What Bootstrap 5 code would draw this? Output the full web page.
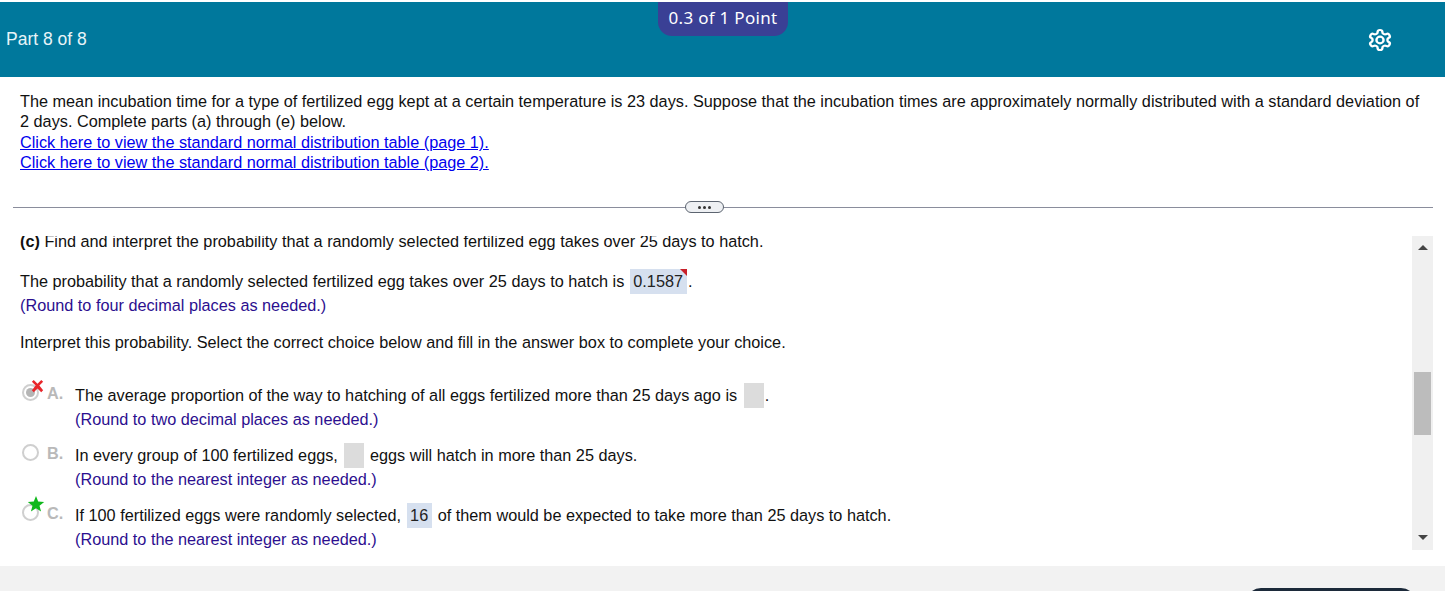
<!DOCTYPE html>
<html lang="en">
<head>
    <meta charset="UTF-8">
    <meta name="viewport" content="width=device-width, initial-scale=1.0">
    <title>Part 8 of 8</title>
    <link rel="stylesheet" href="https://cdn.jsdelivr.net/npm/bootstrap@5.3.0/dist/css/bootstrap.min.css">
    <style>
        html, body { height: 591px; overflow: hidden; }
        body { font-family: "Liberation Sans", Arial, sans-serif; font-size: 16.25px; line-height: 20px; color: #111; background: #fff; }
        .top-bar { height: 75px; margin-top: 2px; background: #00789c; color: #e8f4f8; padding: 0 52px 0 6px; position: relative; }
        .part-label { margin-top: -1px; font-size: 17.5px; }
        .score-tab { position: absolute; left: 658px; top: 0; width: 130px; height: 34px; background: #3a4095; color: #fff; border-radius: 0 0 14px 14px; font-family: "Noto Sans", sans-serif; font-size: 17px; letter-spacing: .3px; text-align: center; line-height: 32px; }
        .gear-icon { margin-top: 1px; }
        .question-head { height: 123px; padding: 14px 20px 0; }
        .question-head a { color: #0000ee; }
        .split-line { height: 1px; margin: 7px 12px 0 13px; background: #8a8d9c; position: relative; }
        .split-pill { position: absolute; left: 672px; top: -6px; width: 39px; height: 12px; background: #eef0f3; border: 1px solid #5c6470; border-radius: 6px; }
        .split-pill span { position: absolute; top: 4px; width: 3px; height: 3px; background: #333; border-radius: 50%; }
        .scroll-box { height: 314px; margin: 28px 12px 0 0; overflow: hidden; }
        .scroll-text { padding-left: 20px; margin-top: -5px; }
        .scroll-text p { margin: 0; }
        .hint { color: #2c0f8f; margin-top: 1px; }
        .scroll-text p.hint { margin-top: 1px; }
        .fake-scroll { width: 21px; background: #f0f0f0; }
        .scroll-thumb { width: 17px; height: 63px; margin: 122px 2px 0; background: #bcbcbc; }
        .arrow-up { width: 0; height: 0; margin: 9px auto 0; border: 5px solid transparent; border-top: 0; border-bottom: 5px solid #444; }
        .arrow-down { width: 0; height: 0; margin: 0 auto 10px; border: 5px solid transparent; border-bottom: 0; border-top: 5px solid #444; }
        .answer-box { display: inline-block; padding: 0 3.5px; margin: 0 1.5px 0 1px; height: 25px; line-height: 25px; background: #d6e0ef; color: #222; position: relative; }
        .answer-empty { display: inline-block; width: 20px; height: 25px; margin: 0 1px 0 2px; background: #dcdcdc; vertical-align: -7px; }
        .wrong-corner { position: absolute; right: 0; top: 0; width: 0; height: 0; border-top: 7px solid #c8202a; border-left: 7px solid transparent; }
        .choice-row { display: flex; height: 60px; position: relative; }
        .radio-ring { width: 17px; height: 17px; margin: 1px 0 0 2px; border: 2px solid #cfcfcf; border-radius: 50%; flex: none; position: relative; }
        .radio-ring.on::after { content: ""; position: absolute; left: 2px; top: 2px; width: 9px; height: 9px; background: #b5b5b5; border-radius: 50%; }
        .choice-letter { width: 36px; padding-left: 8px; color: #b9b9b9; font-weight: 700; flex: none; }
        .mark-x { position: absolute; left: 10px; top: -4px; }
        .mark-star { position: absolute; left: 7px; top: -8px; }
        .ft-bar { height: 25px; margin-top: 16px; background: #f2f2f2; position: relative; overflow: hidden; }
        .ft-btn { position: absolute; left: 1246px; top: 22px; width: 170px; height: 30px; background: #1c2a3a; border-radius: 15px; }
    </style>
</head>
<body>

    <div class="top-bar d-flex align-items-center justify-content-between">
        <div class="part-label">Part 8 of 8</div>
        <div class="score-tab">0.3 of 1 Point</div>
        <svg class="gear-icon" width="26" height="24" viewBox="0 0 24 24" preserveAspectRatio="none" fill="none" stroke="#fff" stroke-width="2.2" stroke-linejoin="round" stroke-linecap="round">
            <path d="M12.22 2h-.44a2 2 0 0 0-2 2v.18a2 2 0 0 1-1 1.73l-.43.25a2 2 0 0 1-2 0l-.15-.08a2 2 0 0 0-2.73.73l-.22.38a2 2 0 0 0 .73 2.73l.15.1a2 2 0 0 1 1 1.72v.51a2 2 0 0 1-1 1.74l-.15.09a2 2 0 0 0-.73 2.73l.22.38a2 2 0 0 0 2.73.73l.15-.08a2 2 0 0 1 2 0l.43.25a2 2 0 0 1 1 1.73V20a2 2 0 0 0 2 2h.44a2 2 0 0 0 2-2v-.18a2 2 0 0 1 1-1.73l.43-.25a2 2 0 0 1 2 0l.15.08a2 2 0 0 0 2.73-.73l.22-.39a2 2 0 0 0-.73-2.73l-.15-.08a2 2 0 0 1-1-1.74v-.5a2 2 0 0 1 1-1.74l.15-.09a2 2 0 0 0 .73-2.73l-.22-.38a2 2 0 0 0-2.73-.73l-.15.08a2 2 0 0 1-2 0l-.43-.25a2 2 0 0 1-1-1.73V4a2 2 0 0 0-2-2z"/>
            <circle cx="12" cy="12" r="3.3"/>
        </svg>
    </div>

    <div class="question-head">
        The mean incubation time for a type of fertilized egg kept at a certain temperature is 23 days. Suppose that the incubation times are approximately normally distributed with a standard deviation of 2 days. Complete parts (a) through (e) below.
        <div style="margin-top:1px"><a href="#">Click here to view the standard normal distribution table (page 1).</a></div>
        <div><a href="#">Click here to view the standard normal distribution table (page 2).</a></div>
    </div>

    <div class="split-line">
        <div class="split-pill"><span style="left:12px"></span><span style="left:17px"></span><span style="left:22px"></span></div>
    </div>

    <div class="scroll-box d-flex">
        <div class="scroll-text flex-grow-1">
            <p><b>(c)</b> Find and interpret the probability that a randomly selected fertilized egg takes over 25 days to hatch.</p>
            <p style="margin-top:18px">The probability that a randomly selected fertilized egg takes over 25 days to hatch is <span class="answer-box">0.1587<i class="wrong-corner"></i></span>.</p>
            <p class="hint">(Round to four decimal places as needed.)</p>
            <p style="margin-top:17px;margin-bottom:31px">Interpret this probability. Select the correct choice below and fill in the answer box to complete your choice.</p>

            <div class="choice-row">
                <span class="radio-ring on"></span>
                <span class="choice-letter">A.</span>
                <svg class="mark-x" width="15" height="15" viewBox="0 0 16 16"><path d="M2 3l2-2 4 4 4-4 2 2-4 4 4 5-2 2-4-4-4 4-2-2 4-5z" fill="#e8262a"/></svg>
                <div>
                    <div>The average proportion of the way to hatching of all eggs fertilized more than 25 days ago is <span class="answer-empty"></span>.</div>
                    <div class="hint">(Round to two decimal places as needed.)</div>
                </div>
            </div>
            <div class="choice-row">
                <span class="radio-ring"></span>
                <span class="choice-letter">B.</span>
                <div>
                    <div>In every group of 100 fertilized eggs, <span class="answer-empty"></span> eggs will hatch in more than 25 days.</div>
                    <div class="hint">(Round to the nearest integer as needed.)</div>
                </div>
            </div>
            <div class="choice-row">
                <span class="radio-ring"></span>
                <span class="choice-letter">C.</span>
                <svg class="mark-star" width="18" height="18" viewBox="0 0 18 18"><path d="M9 1l2.2 5.6 6 .3-4.7 3.8 1.6 5.8L9 13.3l-5.1 3.2 1.6-5.8L.8 6.9l6-.3z" fill="#10b81c"/></svg>
                <div>
                    <div>If 100 fertilized eggs were randomly selected, <span class="answer-box">16</span> of them would be expected to take more than 25 days to hatch.</div>
                    <div class="hint">(Round to the nearest integer as needed.)</div>
                </div>
            </div>
        </div>
        <div class="fake-scroll d-flex flex-column flex-shrink-0">
            <div class="arrow-up"></div>
            <div class="scroll-thumb"></div>
            <div class="arrow-down mt-auto"></div>
        </div>
    </div>

    <div class="ft-bar"><div class="ft-btn"></div></div>

</body>
</html>
